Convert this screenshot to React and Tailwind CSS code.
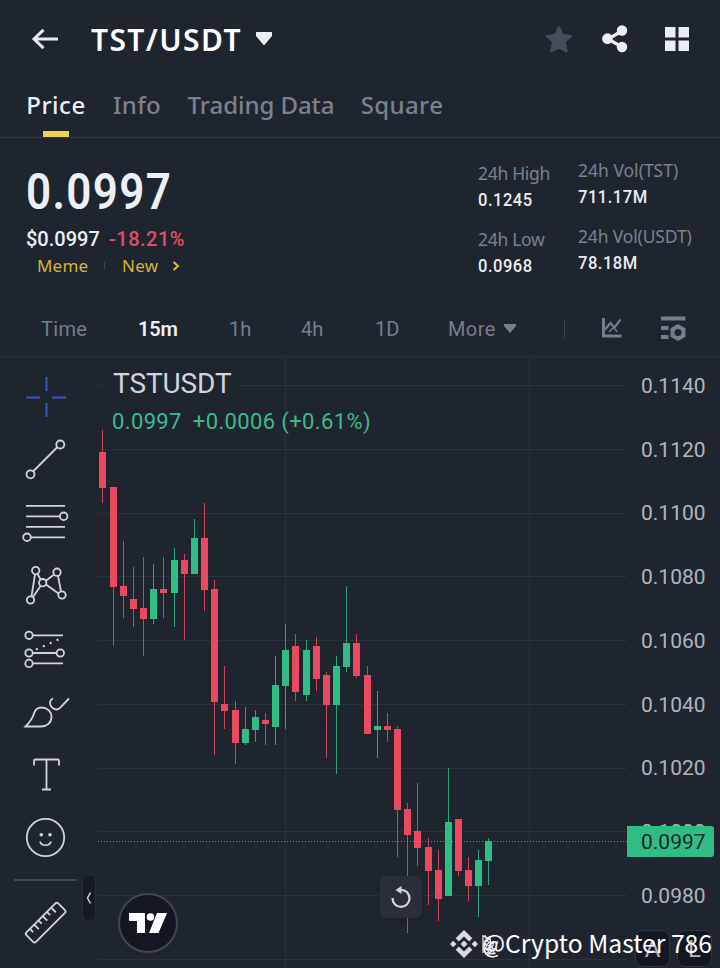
import React, { useState } from "react";

const UP = "#2fbd85";
const DOWN = "#ea4a60";

// x, wick top, body top, body bottom, wick bottom, direction
const CANDLES = [
  [102.5, 430, 452, 488, 503, 0],
  [113.5, 487, 487, 587, 646, 0],
  [123.5, 541, 586, 596, 618, 0],
  [133.5, 567, 599, 609, 627, 0],
  [143.5, 557, 608, 619, 656, 0],
  [153.5, 564, 589, 619, 624, 1],
  [163.5, 557, 589, 593, 618, 0],
  [174.5, 548, 560, 593, 627, 1],
  [184.5, 554, 560, 574, 640, 0],
  [194.5, 519, 538, 574, 574, 1],
  [204.5, 503, 538, 590, 611, 0],
  [214.5, 580, 589, 702, 755, 0],
  [224.5, 666, 704, 711, 729, 0],
  [235.5, 701, 710, 743, 764, 0],
  [245.5, 707, 729, 743, 745, 1],
  [255.5, 710, 717, 730, 742, 1],
  [265.5, 713, 720, 724, 745, 0],
  [275.5, 656, 685, 727, 745, 1],
  [285.5, 624, 650, 686, 729, 1],
  [295.5, 634, 646, 692, 701, 0],
  [306.5, 640, 650, 695, 701, 1],
  [316.5, 637, 646, 679, 691, 0],
  [326.5, 672, 675, 705, 758, 0],
  [336.5, 656, 666, 705, 774, 1],
  [346.5, 586, 643, 667, 672, 1],
  [356.5, 634, 643, 676, 678, 0],
  [367.5, 666, 675, 734, 734, 0],
  [377.5, 691, 726, 730, 758, 1],
  [387.5, 713, 726, 730, 742, 0],
  [397.5, 726, 729, 810, 857, 0],
  [407.5, 803, 809, 835, 933, 0],
  [417.5, 783, 831, 848, 866, 0],
  [428.5, 838, 847, 871, 905, 0],
  [438.5, 850, 870, 899, 921, 0],
  [448.5, 768, 822, 896, 896, 1],
  [458.5, 819, 819, 871, 876, 0],
  [468.5, 857, 870, 886, 901, 0],
  [478.5, 850, 860, 886, 917, 1],
  [488.5, 838, 841, 861, 885, 1],
];

const GRID_Y = [385.5, 449.5, 513.5, 576.5, 640.5, 704.5, 768.5, 831.5, 895.5, 959.5];
const PRICES = ["0.1140", "0.1120", "0.1100", "0.1080", "0.1060", "0.1040", "0.1020", "0.1000", "0.0980"];

const TABS = [
  { label: "Price", cls: "w-[58px] tracking-[0.5px]" },
  { label: "Info", cls: "w-[48px] tracking-[0.3px]" },
  { label: "Trading Data", cls: "w-[144px] tracking-[-0.050px]" },
  { label: "Square", cls: "w-[82px] tracking-[0.400px]" },
];

const INTERVALS = [
  { label: "Time", cls: "w-[97px] tracking-[0.300px]" },
  { label: "15m", cls: "w-[91px] tracking-[-0.200px]" },
  { label: "1h", cls: "w-[72px]" },
  { label: "4h", cls: "w-[74px]" },
  { label: "1D", cls: "w-[73px]" },
];

function Header() {
  return (
    <header className="flex h-[78px] items-center pl-[31px] pr-[31px]">
      <svg width="28" height="22" viewBox="0 0 28 22" fill="none" stroke="#e6e9ef" strokeWidth="3">
        <path d="M27 11H4M12.5 1.8 3 11l9.500 9.200" />
      </svg>
      <h1 className="ml-[32px] w-[151px] pt-[2px] text-[30px] font-semibold leading-none tracking-[1.400px] text-white">TST/USDT</h1>
      <svg className="ml-[14px]" width="16" height="14" viewBox="0 0 16 14" fill="#eceef3">
        <path d="M0 0h16v4L8 13.500 0 4z" />
      </svg>
      <div className="ml-auto flex items-center">
        <svg width="28" height="28" viewBox="0 0 28 28" fill="#474d5a" stroke="#474d5a" strokeWidth="2" strokeLinejoin="round">
          <path d="m14 2 3.700 7.900 8.600 1-6.400 5.900 1.800 9.700L14 22.300 6.300 26.500l1.800-9.700-6.400-5.900 8.600-1z" />
        </svg>
        <svg className="ml-[28px]" width="28" height="28" viewBox="0 0 28 28" fill="#eceef3">
          <path d="M21 6 7 14l14 8" fill="none" stroke="#eceef3" strokeWidth="3.200" />
          <circle cx="21" cy="5.500" r="5.200" />
          <circle cx="6.500" cy="13.700" r="5.400" />
          <circle cx="21" cy="22" r="5.200" />
        </svg>
        <svg className="ml-[36px]" width="24" height="24" viewBox="0 0 24 24" fill="#e9edf4">
          <path d="M0 0h10.500v10.500H0zM13.500 0H24v10.500H13.500zM0 13.500h10.500V24H0zM13.500 13.500H24V24H13.500z" />
        </svg>
      </div>
    </header>
  );
}

function Stat({ label, value, labelCls }) {
  return (
    <div className="h-[66px] whitespace-nowrap">
      <div className={`h-[26px] text-[17.500px] leading-[25px] text-[#7b818d] ${labelCls}`}>{label}</div>
      <div className="h-[26px] origin-left scale-x-[0.92] font-['Roboto'] text-[18px] font-medium leading-[26px] tracking-[0.550px] text-[#eaecef]">{value}</div>
    </div>
  );
}

function Summary() {
  return (
    <section className="flex h-[162px] whitespace-nowrap">
      <div className="w-[478px] pl-[26px] pt-[26px]">
        <div className="h-[56px] origin-left scale-x-[0.88] font-['Roboto'] text-[50px] font-semibold leading-[57px] tracking-[1.500px] text-[#eceff5]">0.0997</div>
        <div className="mt-[5px] flex h-[28px] items-center font-['Roboto'] text-[20px] font-medium">
          <span className="w-[83px] text-[#eceff5]">$0.0997</span>
          <span className="tracking-[0.500px] text-[#e04e63]">-18.21%</span>
        </div>
        <div className="flex h-[26px] items-center pl-[11px] text-[17px] text-[#d8b23f]">
          <span className="w-[67px] tracking-[0.200px]">Meme</span>
          <span className="h-[8px] w-px bg-[#3d4450]" />
          <span className="ml-[17px] w-[50px] tracking-[0.300px]">New</span>
          <svg width="8" height="10" viewBox="0 0 8 10" fill="none" stroke="#e0b83f" strokeWidth="2">
            <path d="m1.500 1 4.500 4-4.500 4" />
          </svg>
        </div>
      </div>
      <div className="w-[100px] pt-[23px]">
        <Stat label="24h High" value="0.1245" labelCls="tracking-[-0.300px]" />
        <Stat label="24h Low" value="0.0968" labelCls="tracking-[-0.300px]" />
      </div>
      <div className="pt-[20px]">
        <Stat label="24h Vol(TST)" value="711.17M" labelCls="" />
        <Stat label="24h Vol(USDT)" value="78.18M" labelCls="tracking-[-0.150px]" />
      </div>
    </section>
  );
}

function IntervalBar({ active, onSelect }) {
  return (
    <div className="flex h-[58px] items-center border-b-[3px] border-[#252c36] pl-[41px] pt-[2px] font-['Roboto'] text-[20px] text-[#777d89]">
      {INTERVALS.map(({ label, cls }) => (
        <button
          key={label}
          onClick={() => onSelect(label)}
          className={`text-left ${cls} ${active === label ? "font-semibold text-[#eceff5]" : ""}`}
        >
          {label}
        </button>
      ))}
      <span className="w-[56px] tracking-[0.400px]">More</span>
      <svg width="12" height="10" viewBox="0 0 12 10" fill="#777d89">
        <path d="M0 0h12v2L6 9 0 2z" />
      </svg>
      <span className="ml-[48px] h-[20px] w-px bg-[#3b424e]" />
      <svg className="mb-[1px] ml-[37px]" width="20" height="20" viewBox="0 0 20 20" fill="none" stroke="#777d89">
        <path d="M1.500 0v18H19.500" strokeWidth="3" />
        <path d="m3 11.500 5.500-6.500 4 4.500 6-8" strokeWidth="2.200" />
        <path d="m7 14 4.500-4.500L15.500 14" strokeWidth="1.500" />
      </svg>
      <svg className="ml-[39px]" width="25" height="26" viewBox="0 0 25 26" fill="#777d89">
        <path d="M0 .500h24.500v4H0zM0 10h7.500v4H0zM0 19h7.500v4H0z" />
        <path fillRule="evenodd" d="m17 8 7.500 4.200v8.600L17 25l-7.500-4.200v-8.600zM17 13a3.500 3.500 0 1 0 0 7 3.500 3.500 0 0 0 0-7z" />
      </svg>
    </div>
  );
}

function Toolbar() {
  return (
    <aside className="relative w-[98px] shrink-0">
      <svg width="98" height="610" viewBox="0 358 98 610" fill="none" stroke="#d1d4dc" strokeWidth="1.800">
        {/* crosshair */}
        <path stroke="#3357c4" strokeWidth="2" d="M46.500 377v14M46.500 403v14M26 397.500h14M52 397.500h14" />
        {/* trend line */}
        <path d="M33 471.500 57.500 447" />
        <circle cx="30.500" cy="474.300" r="4" />
        <circle cx="60.300" cy="444.500" r="4" />
        {/* fib levels */}
        <path d="M26 505.800h39M26 516.300h34M26 526.800h39M31 537.300h34" />
        <circle cx="63.700" cy="516.300" r="3.800" />
        <circle cx="27" cy="537.300" r="3.800" />
        {/* pattern */}
        <path d="m31.500 596.500 3.500-22M37.500 574l3.500 6M45.500 581l8-6M58 576l3 15.500M46 584.500l12.500 9M33 597l7.500-11" />
        <circle cx="35.700" cy="570.600" r="3.700" />
        <circle cx="57" cy="572.200" r="3.700" />
        <circle cx="42.700" cy="582.700" r="3.700" />
        <circle cx="30.500" cy="600" r="3.700" />
        <circle cx="62" cy="595" r="3.700" />
        {/* forecast */}
        <path d="M33 635.300h30M33 653h24M33 663.400h30" />
        <path d="M36 649.500 63 637.500" strokeWidth="2.200" strokeDasharray="2 5.500" />
        <circle cx="29" cy="635.300" r="3.700" />
        <circle cx="29" cy="653" r="3.700" />
        <circle cx="60.300" cy="653" r="3.700" />
        <circle cx="29" cy="663.400" r="3.700" />
        {/* brush */}
        <path d="M25.500 726.500h15.500c6 0 10.500-4 10.500-9.500S47 707.500 41.500 707.500c-4 0-6.500 2.500-7.500 6-1.500 5-4 8.500-8.500 13zM53 698.300c-3 1.500-4 5-2 8l2 2c2.500 1.800 5 1.500 7-.5l9-9.300" />
        {/* text tool */}
        <path d="M34 765.500V761c0-1 .500-1.500 1.500-1.500h22c1 0 1.500.500 1.500 1.500v4.500M46.500 759.500v30M42 789.500h9" />
        {/* emoji */}
        <circle cx="45.500" cy="837.500" r="18.700" />
        <path d="M40 841.500c1.200 5 9.800 5 11 0" strokeWidth="1.600" />
        <circle cx="41.300" cy="834.700" r="1.800" fill="#d1d4dc" stroke="none" />
        <circle cx="50" cy="834.700" r="1.800" fill="#d1d4dc" stroke="none" />
        <path d="M14 880h63" stroke="#434651" strokeWidth="2" />
        {/* ruler */}
        <g transform="rotate(-45 45.500 922.500)">
          <rect x="23" y="916" width="45" height="13.500" rx="2" />
          <path d="M30 916v4.500M36 916v6.500M42 916v4.500M48 916v6.500M54 916v4.500M60 916v6.500" />
        </g>
      </svg>
      <button className="absolute left-[82px] top-[516px] flex h-[47px] w-[14px] items-center justify-center rounded-[6px] border border-[#272c37] bg-[#151a24]">
        <svg width="6" height="12" viewBox="0 0 6 12" fill="none" stroke="#d1d4dc" strokeWidth="1.500">
          <path d="M4.500.500 1.500 6l3 5.500" />
        </svg>
      </button>
    </aside>
  );
}

function CandleChart() {
  return (
    <svg width="529" height="610" viewBox="98 358 529 610" shapeRendering="crispEdges">
      {GRID_Y.map((y) => (
        <path key={y} d={`M98 ${y}H627`} stroke="#2a313b" />
      ))}
      <path d="M285.500 355V968M529.500 355V968" stroke="#2a313b" />
      {CANDLES.map(([x, high, top, bottom, low, up]) => (
        <g key={x} fill={up ? UP : DOWN}>
          <rect x={x - 0.5} y={high} width="1" height={low - high} opacity="0.85" />
          <rect x={x - 3.5} y={top} width="7" height={bottom - top} />
        </g>
      ))}
      <path d="M98 841.500H627" stroke="#45a68b" strokeDasharray="1 2" />
    </svg>
  );
}

function Watermark() {
  return (
    <div className="absolute bottom-[6px] right-[8px] flex items-center whitespace-nowrap">
      <svg width="28" height="28" viewBox="0 0 28 28" fill="#d7dae3">
        <path d="m14 0 8.300 8.300-3.200 3.200L14 6.400l-5.100 5.100-3.200-3.200zM14 28l8.300-8.300-3.200-3.200L14 21.600l-5.100-5.100-3.200 3.200zM0 14l3.200-3.200L6.400 14l-3.200 3.200zM21.600 14l3.200-3.200L28 14l-3.200 3.200zM10.500 14l3.500-3.500 3.500 3.500-3.500 3.500z" />
      </svg>
      <span className="relative top-[-2px] ml-[4px] font-['Noto_Sans_CJK_SC'] text-[24.700px] leading-[36px] text-white">
        @Crypto Master 786
        <svg className="absolute left-0 top-[10px]" width="16" height="22" viewBox="0 0 16 22" fill="none" stroke="#f2f3f6" strokeWidth="1.200">
          <path d="M1 1v18M1 2l5 2-3 3 5 1-4 3 6 1-6 3 7 1-4 3 6 1M3 1l2 6 3-3 1 6 3-2-2 6 3 1-2 4M2 9l3 2-2 4 4 2-3 3M6 20l8-1M8 13l4 2" />
        </svg>
      </span>
    </div>
  );
}

function ChartPanel() {
  return (
    <div className="relative flex h-[610px] overflow-hidden">
      <Toolbar />
      <div className="relative">
        <CandleChart />
        <div className="absolute left-[8px] top-[9px] whitespace-nowrap font-['Roboto']">
          <div className="w-[132px] bg-[#1f252f] pl-[7px] text-[28px] leading-[33px] tracking-[-0.100px] text-[#d1d4dc]">TSTUSDT</div>
          <div className="mt-[8px] flex gap-[11px] pl-[6px] text-[22px] leading-[28px] tracking-[0.370px] text-[#3fb98a]">
            <span>0.0997</span>
            <span>+0.0006 (+0.61%)</span>
          </div>
        </div>
        <button className="absolute left-[282px] top-[518px] flex h-[42px] w-[42px] items-center justify-center rounded-[6px] bg-[#292e39] shadow-md">
          <svg width="20" height="22" viewBox="0 0 20 22" fill="none" stroke="#d1d4dc" strokeWidth="2.200">
            <path d="M1.500 12a8.500 8.500 0 1 0 8.500-8.200H8" />
            <path d="M10.500 0v8L4.500 4z" fill="#d1d4dc" stroke="none" />
          </svg>
        </button>
        <div className="absolute left-[20px] top-[535px] flex h-[60px] w-[60px] items-center justify-center rounded-full border-2 border-[#434651] bg-[#131722]">
          <svg width="38" height="20" viewBox="0 0 38 20" fill="#fff">
            <path d="M0 0h16v20H8V8H0zM28 0h10l-8.500 20H20z" />
            <circle cx="21.500" cy="4" r="3.800" />
          </svg>
        </div>
      </div>
      <div className="relative w-[93px] font-['Roboto'] text-[21px] text-[#b2b5be]">
        <div className="-mt-[3px]">
          {PRICES.map((p) => (
            <div key={p} className="flex h-[63.700px] items-center pl-[14px]">{p}</div>
          ))}
        </div>
        <div className="absolute left-0 top-[468px] flex h-[31px] w-[87px] items-center rounded-r-[3px] bg-[#2fbd85] pl-[14px] pt-[2px] text-[#132a26]">0.0997</div>
        <div className="absolute left-[8px] top-[572px] flex gap-[7px] text-[24px]">
          <button className="h-[37px] w-[35px] rounded-[8px] border border-[#30343f] bg-[#131722]">A</button>
          <button className="h-[37px] w-[35px] rounded-[8px] border border-[#30343f] bg-[#131722]">L</button>
        </div>
      </div>
      <Watermark />
    </div>
  );
}

export default function App() {
  const [tab, setTab] = useState("Price");
  const [interval, setInterval] = useState("15m");

  return (
    <div className="h-[968px] w-[720px] overflow-hidden bg-[#1f252f] font-['Noto_Sans',sans-serif]">
      <Header />
      <nav className="flex h-[60px] gap-[28px] border-b border-[#323943] pl-[27px]">
        {TABS.map(({ label, cls }) => (
          <button
            key={label}
            onClick={() => setTab(label)}
            className={`flex flex-col items-center whitespace-nowrap pt-[11px] text-[24px] font-medium leading-[32px] ${cls} ${tab === label ? "text-[#eceff5]" : "text-[#7b818d]"}`}
          >
            {label}
            {tab === label && <span className="mt-auto h-[6px] w-[26px] bg-[#f0d04f]" />}
          </button>
        ))}
      </nav>
      <Summary />
      <IntervalBar active={interval} onSelect={setInterval} />
      <ChartPanel />
    </div>
  );
}
